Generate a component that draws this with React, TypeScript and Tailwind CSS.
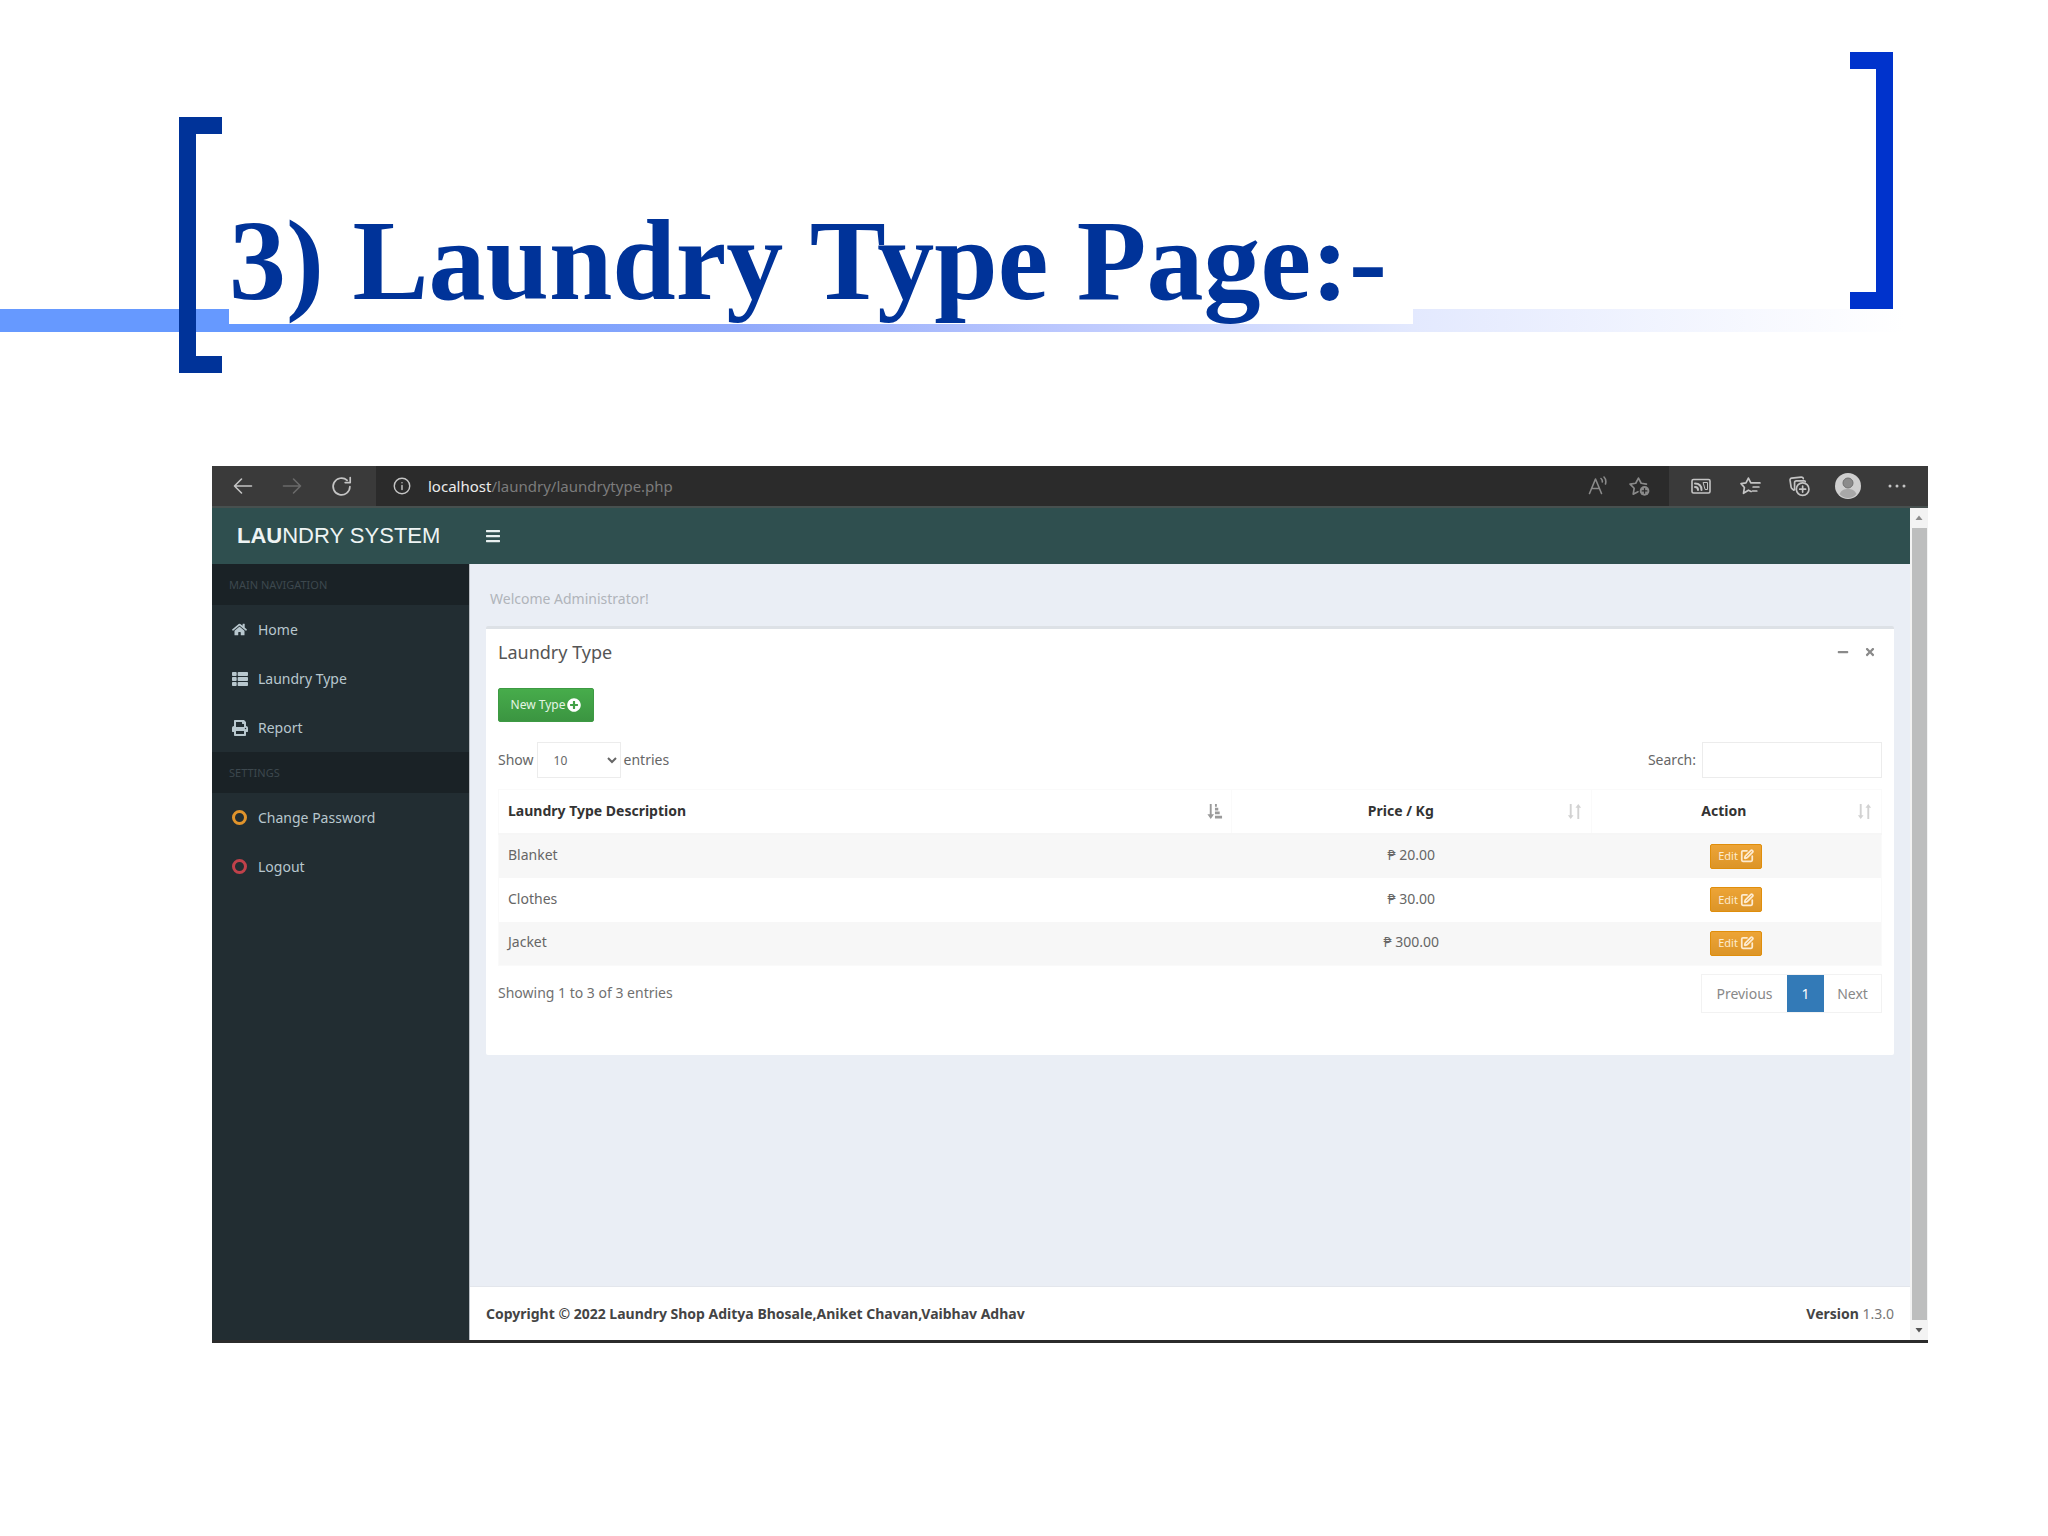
import type { ReactNode } from "react";
import { SquarePen } from "lucide-react";
import { FaBars, FaHome, FaMinus, FaPlusCircle, FaPrint, FaThList, FaTimes } from "react-icons/fa";

const stroke = {
  fill: "none",
  stroke: "currentColor",
  strokeWidth: 1.6,
  strokeLinecap: "round" as const,
  strokeLinejoin: "round" as const,
};

function ChromeButton({ label, className = "", children }: { label: string; className?: string; children: ReactNode }) {
  return (
    <button aria-label={label} className={`flex size-7 flex-none items-center justify-center ${className}`}>
      {children}
    </button>
  );
}

function BrowserBar() {
  return (
    <div className="flex h-[42px] items-center border-b-2 border-[#47504f] bg-[#3a3a3a] pr-[17px] text-[#c4c4c4]">
      <nav aria-label="Browser" className="flex w-[164px] flex-none items-center gap-[21px] pl-[17px]">
        <ChromeButton label="Back">
          <svg viewBox="0 0 20 20" className="size-5" {...stroke}><path d="M18.500 10H1.500M8.500 3 1.500 10l7 7" /></svg>
        </ChromeButton>
        <ChromeButton label="Forward" className="text-[#6a6a6a]">
          <svg viewBox="0 0 20 20" className="size-5" {...stroke}><path d="M1.500 10h17M11.500 3l7 7-7 7" /></svg>
        </ChromeButton>
        <ChromeButton label="Refresh">
          <svg viewBox="0 0 20 20" className="size-[21px]" {...stroke}><path d="M18 10a8 8 0 1 1-2.600-5.900M18.300 1.500v4.800h-4.800" /></svg>
        </ChromeButton>
      </nav>
      <div className="flex h-10 min-w-0 flex-1 items-center bg-[#2b2b2b] pr-4 pl-[17px]">
        <svg viewBox="0 0 20 20" className="mr-[17px] size-[18px] flex-none" {...stroke}>
          <circle cx="10" cy="10" r="8.600" /><path d="M10 9.500v4.500M10 6.300v.2" />
        </svg>
        <p className="flex-1 text-[15px] text-[#7c7c7c]"><span className="text-[#ececec]">localhost</span>/laundry/laundrytype.php</p>
        <div className="flex gap-[13px] text-[#8a8a8a]">
          <ChromeButton label="Read aloud">
            <svg viewBox="0 0 20 20" className="size-5" {...stroke}><path d="M1.500 17.500 7.500 3l6 14.500M3.700 12.500h7.600M13 2.500c1 .8 1.500 2 1.300 3.500M16 1c1.700 1.700 2.300 4 1.500 7" /></svg>
          </ChromeButton>
          <ChromeButton label="Add to favorites">
            <svg viewBox="0 0 20 20" className="size-[21px]" {...stroke}><path d="M8.500 15 4 17.300l.9-5.600L1 7.700l5.400-.8L9 2l2.600 4.900 5 .8" /><circle cx="14.800" cy="14.200" r="4.600" fill="currentColor" stroke="none" /><path d="M14.800 12v4.400M12.600 14.200H17" stroke="#2b2b2b" strokeWidth="1.200" /></svg>
          </ChromeButton>
        </div>
      </div>
      <div className="flex items-center gap-[21px] pl-[18px]">
        <ChromeButton label="Cast">
          <svg viewBox="0 0 20 20" className="size-5" {...stroke}><rect x="1" y="3.500" width="18" height="13.500" rx="1.500" /><path d="M4 7.500c4 0 6.500 2.500 6.500 6.500M4 11c2 0 3 1 3 3" strokeWidth="2" /><path d="M12.500 6.500h4v7h-2z" strokeWidth="1" /></svg>
        </ChromeButton>
        <ChromeButton label="Favorites">
          <svg viewBox="0 0 20 20" className="size-[21px]" {...stroke}><path d="M10.500 14.800 8 13.500l-4.700 3 .9-5.600L1 7.300l4.700-.7L8 2l2.300 4.600H19M12.500 10.500h5.500M12 14.300h4" /></svg>
        </ChromeButton>
        <ChromeButton label="Collections">
          <svg viewBox="0 0 20 20" className="size-[21px]" {...stroke}><path d="M4.500 13.500 2.800 12A2 2 0 0 1 2 10.500L1 4a1.800 1.800 0 0 1 1.600-2l9-1a1.800 1.800 0 0 1 2 1.600" /><path d="M15.500 5.500c0-.3-.5-.8-1-.8H7c-1 0-1.700.7-1.700 1.700V13" /><circle cx="13" cy="12.500" r="6" /><path d="M13 9.700v5.600M10.200 12.500h5.600" /></svg>
        </ChromeButton>
        <ChromeButton label="Profile">
          <svg viewBox="0 0 28 28" className="size-7"><circle cx="14" cy="14" r="13" fill="#cfcfcf" /><circle cx="14" cy="11" r="5" fill="#8b8b8b" stroke="#707070" /><path d="M5.500 22c2-4 4.500-5 8.500-5s6.500 1 8.500 5A12 12 0 0 1 14 26a12 12 0 0 1-8.500-4z" fill="#a8a8a8" /></svg>
        </ChromeButton>
        <ChromeButton label="Settings and more">
          <svg viewBox="0 0 20 20" className="size-5" fill="currentColor"><circle cx="3" cy="10" r="1.500" /><circle cx="10" cy="10" r="1.500" /><circle cx="17" cy="10" r="1.500" /></svg>
        </ChromeButton>
      </div>
    </div>
  );
}

function MenuHeading({ children }: { children: ReactNode }) {
  return <h3 className="flex h-[41px] items-center bg-[#1a2226] px-[17px] text-[11px] text-[#3d484e]">{children}</h3>;
}

function MenuItem({ icon, children }: { icon: ReactNode; children: ReactNode }) {
  return (
    <a href="#" className="flex h-[49px] items-center pl-5 text-[#b8c7ce]">
      <span className="flex w-[26px] items-center">{icon}</span>
      {children}
    </a>
  );
}

function Sidebar() {
  return (
    <aside className="w-[257px] flex-none bg-[#222d32]">
      <MenuHeading>MAIN NAVIGATION</MenuHeading>
      <MenuItem icon={<FaHome className="size-[15px]" />}>Home</MenuItem>
      <MenuItem icon={<FaThList className="size-4" />}>Laundry Type</MenuItem>
      <MenuItem icon={<FaPrint className="size-4" />}>Report</MenuItem>
      <MenuHeading>SETTINGS</MenuHeading>
      <MenuItem icon={<span className="size-[15px] rounded-full border-3 border-[#e0932b]" />}>Change Password</MenuItem>
      <MenuItem icon={<span className="size-[15px] rounded-full border-3 border-[#c0414a]" />}>Logout</MenuItem>
    </aside>
  );
}

function SortIcon({ active = false }: { active?: boolean }) {
  return active ? (
    <svg viewBox="0 0 16 18" className="size-[17px] flex-none text-[#9a9a9a]" fill="currentColor"><path d="M3 1h2v11h2.500L4 17 .5 12H3zM8.500 1h2v3h-2zM8.500 5h3.500v3H8.500zM8.500 9h5v3h-5zM8.500 13.500H16v3H8.500z" /></svg>
  ) : (
    <svg viewBox="0 0 16 18" className="size-[17px] flex-none text-[#d2d2d2]" fill="currentColor"><path d="M3 1h2v12h2l-3 4-3-4h2zM11 17V5H9l3-4 3 4h-2v12z" /></svg>
  );
}

const rows = [
  { name: "Blanket", price: "20.00" },
  { name: "Clothes", price: "30.00" },
  { name: "Jacket", price: "300.00" },
];

function LaundryTable() {
  return (
    <table className="mt-[11px] w-full table-fixed border-collapse border border-[#fafafa]">
      <colgroup>
        <col className="w-[53%]" />
        <col className="w-[26%]" />
        <col className="w-[21%]" />
      </colgroup>
      <thead>
        <tr className="h-11 border-b-2 border-[#f6f6f6] text-[#333]">
          <th className="border-r border-[#fafafa] pr-2 pl-[9px] text-left">
            <span className="flex items-center justify-between">Laundry Type Description<SortIcon active /></span>
          </th>
          <th className="border-r border-[#fafafa] pr-2 pl-[10px]">
            <span className="flex items-center"><span className="flex-1 pr-[6px]">Price / Kg</span><SortIcon /></span>
          </th>
          <th className="pr-2 pl-[10px]">
            <span className="flex items-center"><span className="flex-1 pr-[10px]">Action</span><SortIcon /></span>
          </th>
        </tr>
      </thead>
      <tbody>
        {rows.map((row) => (
          <tr key={row.name} className="h-11 text-[#666] odd:bg-[#f7f7f7]">
            <td className="pb-[2px] pl-[9px]">{row.name}</td>
            <td className="pb-[2px] text-center">₱ {row.price}</td>
            <td>
              <button className="mx-auto flex h-[25px] w-[52px] items-center justify-center gap-[2px] rounded-xs border border-[#e08e0b] bg-linear-to-b from-[#eda436] to-[#dc9528] text-[11px] text-[#fdebd0]">
                Edit<SquarePen className="size-[14px]" strokeWidth={3} />
              </button>
            </td>
          </tr>
        ))}
      </tbody>
    </table>
  );
}

function LaundryCard() {
  return (
    <section className="rounded-xs border-t-3 border-[#dde1e6] bg-white px-3 pb-[42px]">
      <div className="flex h-[45px] items-center text-[#8a8a8a]">
        <h2 className="flex-1 text-[18px] text-[#555]">Laundry Type</h2>
        <button aria-label="Collapse" className="mr-[15px]"><FaMinus className="size-3" /></button>
        <button aria-label="Close" className="mr-[6px]"><FaTimes className="size-3" /></button>
      </div>
      <button className="mt-[14px] flex h-[34px] w-24 items-center justify-center gap-[2px] rounded-xs border border-[#3d9a43] bg-linear-to-b from-[#47ac4b] to-[#3b9541] text-[12px] text-[#e4f5e4]">
        New Type<FaPlusCircle className="size-[14px] text-white" />
      </button>
      <div className="mt-5 flex h-9 items-center justify-between text-[#666]">
        <label className="flex items-center gap-[3px]">
          Show
          <select defaultValue="10" className="h-9 w-[84px] border border-[#ececec] bg-white pl-3 text-[12px] text-[#666]">
            <option>10</option>
            <option>25</option>
            <option>50</option>
          </select>
          entries
        </label>
        <label className="flex items-center gap-[6px]">
          Search:
          <input type="search" className="h-9 w-[180px] border border-[#ececec] bg-white px-3" />
        </label>
      </div>
      <LaundryTable />
      <div className="mt-2 flex items-start justify-between text-[#707070]">
        <p className="leading-[37px]">Showing 1 to 3 of 3 entries</p>
        <nav aria-label="Pages" className="flex h-[39px] border border-[#f2f2f2] text-[#888]">
          <button className="w-[85px]">Previous</button>
          <button aria-current="page" className="w-[37px] bg-[#337ab7] text-white">1</button>
          <button className="w-[57px]">Next</button>
        </nav>
      </div>
    </section>
  );
}

function Scrollbar() {
  return (
    <div aria-hidden="true" className="flex w-[18px] flex-none flex-col items-center bg-[#f3f3f3]">
      <svg viewBox="0 0 8 8" className="my-[6px] size-2 flex-none" fill="#8c8c8c"><path d="M4 1.500 7.500 6h-7z" /></svg>
      <div className="w-[15px] flex-1 bg-[#bdbebe]" />
      <svg viewBox="0 0 8 8" className="my-[6px] size-2 flex-none" fill="#555"><path d="M4 6.500.5 2h7z" /></svg>
    </div>
  );
}

export default function App() {
  return (
    <main className="min-h-screen bg-white pb-48 font-['Noto_Sans',sans-serif] text-[14px] leading-5">
      <header className="relative flex items-start pt-[52px] pr-[155px] pl-[179px]">
        <div className="absolute inset-x-0 top-[309px] h-[23px] bg-[linear-gradient(to_right,#6699ff_18%,#90a9fb_36%,#bcc8fe_52%,#e3e9fe_69%,#ffffff_93%)]" />
        <div className="relative mt-[65px] h-[256px] w-[43px] flex-none border-17 border-r-0 border-[#003399]" />
        <h1 className="relative mt-[145px] ml-[7px] bg-white pr-[26px] font-['Liberation_Serif',serif] text-[114px] leading-[127px] font-bold whitespace-nowrap text-[#003399]">
          3) Laundry Type Page:-
        </h1>
        <div className="relative ml-auto h-[257px] w-[43px] flex-none border-17 border-l-0 border-[#0033cc]" />
      </header>
      <div className="mt-[93px] mr-[120px] ml-[212px] border-b-3 border-[#2b2b2b]">
        <BrowserBar />
        <div className="flex">
          <div className="min-w-0 flex-1">
            <div className="flex h-14 items-center bg-[#2f4f4f] pl-[25px] text-[#e8f0f0]">
              <a href="#" className="w-[248px] font-['Liberation_Sans',sans-serif] text-[22px] text-[#eef4f4]"><b>LAU</b>NDRY SYSTEM</a>
              <button aria-label="Toggle navigation"><FaBars className="size-4" /></button>
            </div>
            <div className="flex">
              <Sidebar />
              <div className="flex min-w-0 flex-1 flex-col border-l border-[#b9bec4]">
                <div className="min-h-[722px] bg-[#eaeef5] px-4">
                  <p className="flex h-[62px] items-center px-1 pt-2 text-[#b0b4ba]">Welcome Administrator!</p>
                  <LaundryCard />
                </div>
                <footer className="flex h-[54px] items-center justify-between border-t border-[#e3e6ec] bg-white px-4 text-[#777]">
                  <b className="text-[#444]">Copyright © 2022 Laundry Shop Aditya Bhosale,Aniket Chavan,Vaibhav Adhav</b>
                  <span><b className="text-[#444]">Version</b> 1.3.0</span>
                </footer>
              </div>
            </div>
          </div>
          <Scrollbar />
        </div>
      </div>
    </main>
  );
}
